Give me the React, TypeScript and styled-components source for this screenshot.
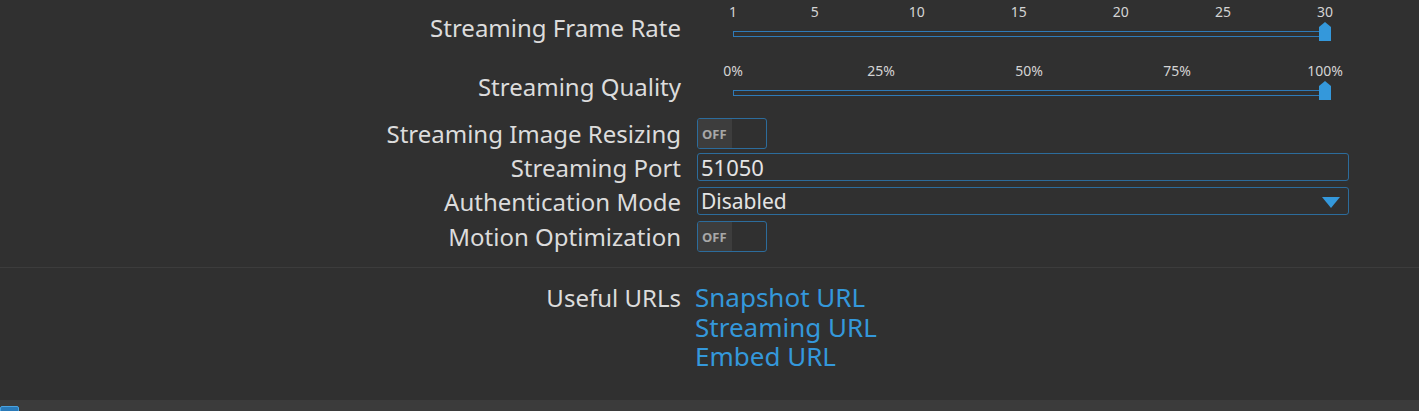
import React from 'react';
import styled, { createGlobalStyle } from 'styled-components';

const GlobalStyle = createGlobalStyle`
  html, body {
    margin: 0;
    padding: 0;
    height: 100%;
    background: #303030;
  }
  #root {
    height: 100%;
  }
`;

const FONT = `'Noto Sans', 'Open Sans', sans-serif`;

type Tick = { label: string; pos: number };

const frameTicks: Tick[] = [1, 5, 10, 15, 20, 25, 30].map(v => ({ label: String(v), pos: ((v - 1) / 29) * 100 }));
const qualityTicks: Tick[] = [0, 25, 50, 75, 100].map(v => ({ label: `${v}%`, pos: v }));

const App = () => {
  return (
    <>
      <GlobalStyle />
      <Page>
        <Content>
          <Form>
            <Label>Streaming Frame Rate</Label>
            <Slider ticks={frameTicks} value={100} />

            <Label>Streaming Quality</Label>
            <Slider ticks={qualityTicks} value={100} />

            <Label>Streaming Image Resizing</Label>
            <Toggle />

            <Label>Streaming Port</Label>
            <Field>
              <TextInput defaultValue='51050' />
            </Field>

            <Label>Authentication Mode</Label>
            <Field>
              <Select>
                <span>Disabled</span>
                <svg width='18' height='11' viewBox='0 0 18 11'>
                  <path d='M0 0 H18 L9 11 Z' fill='#3498db' />
                </svg>
              </Select>
            </Field>

            <Label>Motion Optimization</Label>
            <Toggle />
          </Form>

          <Divider />

          <UrlSection>
            <UrlLabel>Useful URLs</UrlLabel>
            <UrlList>
              <UrlLink href='#'>Snapshot URL</UrlLink>
              <UrlLink href='#'>Streaming URL</UrlLink>
              <UrlLink href='#'>Embed URL</UrlLink>
            </UrlList>
          </UrlSection>
        </Content>
        <Footer>
          <FooterButton />
        </Footer>
      </Page>
    </>
  );
};

const Slider = ({ ticks, value }: { ticks: Tick[]; value: number }) => (
  <SliderBox>
    <TickRow>
      {ticks.map(t => (
        <TickLabel key={t.label} style={{ left: `${t.pos}%` }}>
          {t.label}
        </TickLabel>
      ))}
    </TickRow>
    <TrackArea>
      <Track />
      <Thumb style={{ left: `${value}%` }}>
        <svg width='12' height='19' viewBox='0 0 12 19'>
          <path d='M6 0 L12 5 V19 H0 V5 Z' fill='#3498db' />
        </svg>
      </Thumb>
    </TrackArea>
  </SliderBox>
);

const Toggle = () => (
  <ToggleBox>
    <ToggleKnob>OFF</ToggleKnob>
  </ToggleBox>
);

export default App;

const Page = styled.div`
  display: flex;
  flex-direction: column;
  height: 100%;
  font-family: ${FONT};
  color: #dcdcdc;
`;

const Content = styled.div`
  flex: 1;
`;

const Form = styled.div`
  display: grid;
  grid-template-columns: 681px 652px;
  column-gap: 16px;
  row-gap: 4px;
  align-items: center;
`;

const Label = styled.div`
  text-align: right;
  font-size: 24px;
  line-height: 30px;
  color: #dcdcdc;
  white-space: nowrap;
`;

const SliderBox = styled.div`
  height: 55px;
  padding: 0 24px 0 36px;
`;

const TickRow = styled.div`
  position: relative;
  height: 24px;
`;

const TickLabel = styled.span`
  position: absolute;
  top: 4px;
  transform: translateX(-50%);
  font-size: 14px;
  line-height: 16px;
  color: #d4d4d4;
  white-space: nowrap;
`;

const TrackArea = styled.div`
  position: relative;
  height: 20px;
  padding-top: 7px;
  box-sizing: border-box;
`;

const Track = styled.div`
  height: 6px;
  box-sizing: border-box;
  border: 1px solid #2e7ab8;
  border-right: none;
`;

const Thumb = styled.div`
  position: absolute;
  top: -2px;
  transform: translateX(-50%);
  display: flex;
`;

const ToggleBox = styled.div`
  display: flex;
  width: 70px;
  height: 31px;
  box-sizing: border-box;
  border: 1px solid #2c6c9c;
  border-radius: 3px;
  overflow: hidden;
`;

const ToggleKnob = styled.div`
  display: flex;
  align-items: center;
  width: 34px;
  padding-left: 4px;
  box-sizing: border-box;
  background: #3d3d3d;
  font-size: 13px;
  font-weight: 700;
  color: #a8a8a8;
`;

const Field = styled.div`
  height: 30px;
`;

const TextInput = styled.input`
  display: block;
  height: 28px;
  width: 100%;
  box-sizing: border-box;
  margin: 0;
  padding: 0 3px;
  background: transparent;
  border: 1px solid #2c6c9c;
  border-radius: 3px;
  outline: none;
  font-family: ${FONT};
  font-size: 22px;
  color: #e4e4e4;
`;

const Select = styled.div`
  display: flex;
  align-items: center;
  justify-content: space-between;
  height: 28px;
  box-sizing: border-box;
  padding: 0 8px 0 3px;
  border: 1px solid #2c6c9c;
  border-radius: 3px;
  font-size: 21px;
  color: #e4e4e4;

  > svg {
    margin-top: 2px;
  }
`;

const Divider = styled.div`
  margin-top: 15px;
  height: 1px;
  background: #3c3c3c;
`;

const UrlSection = styled.div`
  display: grid;
  grid-template-columns: 681px auto;
  column-gap: 14px;
  padding-top: 15px;
  align-items: start;
`;

const UrlLabel = styled.div`
  text-align: right;
  font-size: 24px;
  line-height: 29.5px;
  color: #dcdcdc;
`;

const UrlList = styled.div`
  display: flex;
  flex-direction: column;
`;

const UrlLink = styled.a`
  font-size: 26px;
  line-height: 29.5px;
  color: #3498db;
  text-decoration: none;
`;

const Footer = styled.div`
  height: 11px;
  flex-shrink: 0;
  background: #3b3b3b;
  overflow: hidden;
  padding-top: 6px;
  box-sizing: border-box;
`;

const FooterButton = styled.div`
  width: 19px;
  height: 20px;
  box-sizing: border-box;
  background: #2a7ab8;
  border: 1px solid #4aa3e0;
  border-radius: 2px;
`;
